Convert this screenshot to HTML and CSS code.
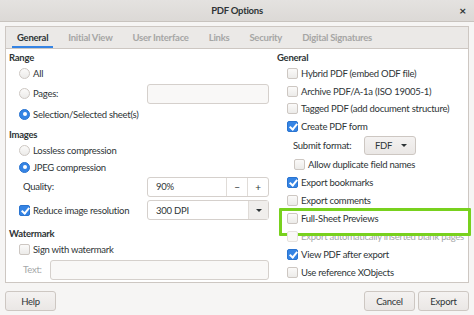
FILE: index.html
```html
<!DOCTYPE html>
<html>
<head>
<meta charset="utf-8">
<link rel="stylesheet" href="styles.css">
</head>
<body>
<div class="window">
  <div class="titlebar">
    <span class="title">PDF Options</span>
    <span class="close">×</span>
  </div>
  <div class="content">
    <div class="notebook">
      <div class="tabs">
        <span class="tab active">General</span>
        <span class="tab">Initial View</span>
        <span class="tab">User Interface</span>
        <span class="tab">Links</span>
        <span class="tab">Security</span>
        <span class="tab">Digital Signatures</span>
      </div>
      <div class="page">
        <div class="col left">
          <div class="row head">Range</div>
          <div class="row opt"><span class="radio"></span>All</div>
          <div class="row opt field-row r-pages"><span class="lab"><span class="radio"></span>Pages:</span><span class="entry"></span></div>
          <div class="row opt r-sel"><span class="radio on"></span>Selection/Selected sheet(s)</div>
          <div class="row head r-images">Images</div>
          <div class="row opt"><span class="radio"></span>Lossless compression</div>
          <div class="row opt r-jpeg"><span class="radio on"></span>JPEG compression</div>
          <div class="row field-row r-quality"><span class="lab sub">Quality:</span>
            <span class="entry spin"><span class="val">90%</span><span class="sbtn">−</span><span class="sbtn">+</span></span></div>
          <div class="row field-row r-reduce"><span class="lab"><span class="check on"></span>Reduce image resolution</span>
            <span class="entry combo"><span class="val">300 DPI</span><span class="sbtn arrow"><span class="tri"></span></span></span></div>
          <div class="row head r-water">Watermark</div>
          <div class="row opt"><span class="check"></span>Sign with watermark</div>
          <div class="row field-row r-text"><span class="lab dim sub">Text:</span><span class="entry wide"></span></div>
        </div>
        <div class="col right">
          <div class="row head">General</div>
          <div class="row copt"><span class="check"></span>Hybrid PDF (embed ODF file)</div>
          <div class="row copt"><span class="check"></span>Archive PDF/A-1a (ISO 19005-1)</div>
          <div class="row copt"><span class="check"></span>Tagged PDF (add document structure)</div>
          <div class="row copt"><span class="check on"></span>Create PDF form</div>
          <div class="row submit"><span class="sublab">Submit format:</span><span class="btn drop">FDF<span class="tri"></span></span></div>
          <div class="row copt lower indent"><span class="check"></span>Allow duplicate field names</div>
          <div class="row copt lower"><span class="check on"></span>Export bookmarks</div>
          <div class="row copt lower"><span class="check"></span>Export comments</div>
          <div class="row copt lower hl"><span class="check"></span>Full-Sheet Previews</div>
          <div class="row copt lower dim"><span class="check off"></span>Export automatically inserted blank pages</div>
          <div class="row copt lower"><span class="check on"></span>View PDF after export</div>
          <div class="row copt lower"><span class="check"></span>Use reference XObjects</div>
        </div>
      </div>
    </div>
    <div class="footer">
      <span class="btn fbtn">Help</span>
      <span class="spacer"></span>
      <span class="btn fbtn">Cancel</span>
      <span class="btn fbtn">Export</span>
    </div>
  </div>
</div>
</body>
</html>
```

FILE: styles.css
```css
* { box-sizing: border-box; }
html, body { margin: 0; padding: 0; }
body {
  width: 474px; height: 315px; overflow: hidden;
  font-family: "Lato", "Noto Sans", sans-serif;
  font-size: 9.5px;
  letter-spacing: -0.25px;
  color: #2e3436;
  background: #f6f5f4;
}
.window { width: 474px; height: 315px; display: flex; flex-direction: column; }
.titlebar {
  height: 22px; flex: none;
  background: linear-gradient(#e4e2e0, #dcd9d6);
  border-bottom: 1px solid #c8c3be;
  display: flex; align-items: center; justify-content: center;
  position: relative;
}
.title { font-weight: bold; font-size: 9.5px; color: #2e3436; }
.close { position: absolute; right: 8px; top: 3px; font-size: 12px; font-weight: bold; color: #2e3436; }
.content { padding: 4px 5px 0 5px; flex: 1; display: flex; flex-direction: column; }
.notebook { border: 1px solid #cdc7c2; background: #fff; height: 257px; display: flex; flex-direction: column; }
.tabs {
  height: 22px; flex: none; background: #ebe9e7;
  border-bottom: 1px solid #cdc7c2;
  display: flex; align-items: stretch; padding-left: 6px;
}
.tab { padding: 0 5px; display: flex; align-items: center; font-weight: bold; color: #a6a6a5; margin-right: 10px; }
.tab.active { color: #2e3436; box-shadow: inset 0 -2px 0 #3584e4; }
.page { flex: 1; display: grid; grid-template-columns: 268px 1fr; }
.col { display: flex; flex-direction: column; }
.left { padding-left: 3px; }
.right { padding-left: 3px; }
.row { display: flex; align-items: center; white-space: nowrap; }
.head { height: 16px; font-weight: bold; }
.opt { height: 16px; padding-left: 10px; }
.field-row { justify-content: space-between; padding-right: 5px; }
.lab { display: flex; align-items: center; }
.r-pages { height: 21px; margin-top: 2px; }
.r-sel { height: 18px; margin-top: 1px; }
.r-images { margin-top: 3px; }
.r-jpeg { margin-top: 1px; }
.r-quality { height: 21px; margin-top: 1px; }
.r-reduce { height: 22px; margin-top: 2px; padding-left: 10px; }
.r-water { margin-top: 4px; }
.r-text { height: 21px; margin-top: 2px; }
.sub { padding-left: 14px; }
.dim { color: #a4a7a8; }
.entry {
  width: 122px; height: 20px;
  border: 1px solid #d5d0cc; border-radius: 3px;
  background: #f9f8f7;
  display: flex; align-items: center;
}
.entry.wide { width: 219px; }
.spin, .combo { background: #fff; }
.val { flex: 1; padding-left: 8px; }
.sbtn { width: 21px; height: 100%; border-left: 1px solid #e0dcd8; display: flex; align-items: center; justify-content: center; font-size: 10px; }
.arrow { background: #f0eeec; width: 20px; }
.tri { display: inline-block; width: 0; height: 0; border-left: 3px solid transparent; border-right: 3px solid transparent; border-top: 3px solid #2e3436; }
.radio {
  width: 11px; height: 11px; border-radius: 50%;
  border: 1px solid #cdc7c2; background: linear-gradient(#fbfaf9, #ecebe9);
  margin-right: 3px; flex: none; position: relative;
}
.radio.on { background: #3584e4; border-color: #2a74d0; }
.radio.on::after { content: ""; position: absolute; left: 2.5px; top: 2.5px; width: 4px; height: 4px; border-radius: 50%; background: #fff; }
.check {
  width: 11px; height: 11px; border-radius: 2px;
  border: 1px solid #cdc7c2; background: linear-gradient(#fbfaf9, #ecebe9);
  margin-right: 3px; flex: none; position: relative;
}
.check.off { border-color: #e6e2de; background: #f9f8f7; }
.check.on { background: #3584e4; border-color: #2a74d0; }
.check.on::after {
  content: ""; position: absolute; left: 3px; top: 0.5px; width: 3px; height: 6px;
  border: solid #fff; border-width: 0 2px 2px 0; transform: rotate(40deg);
}
.copt { height: 17.5px; padding-left: 10px; }
.copt.lower { height: 18px; }
.copt.indent { padding-left: 17px; }
.submit { height: 20px; padding-left: 16px; }
.sublab { width: 71px; }
.btn {
  border: 1px solid #cdc7c2; border-radius: 3px;
  background: linear-gradient(#f4f2f1, #eae7e5);
  display: inline-flex; align-items: center; justify-content: center;
}
.drop { width: 52px; height: 19px; padding: 0 6px 0 10px; justify-content: space-between; }
.drop .tri { margin-right: 2px; }
.hl { position: relative; }
.hl::after {
  content: ""; position: absolute; left: 2px; top: -1px; width: 186px; height: 22px;
  border: 3px solid #78d11e; border-radius: 1px;
}
.footer { display: flex; align-items: flex-start; padding-top: 8px; gap: 3px; }
.spacer { flex: 1; }
.fbtn { width: 51px; height: 20px; }
```
